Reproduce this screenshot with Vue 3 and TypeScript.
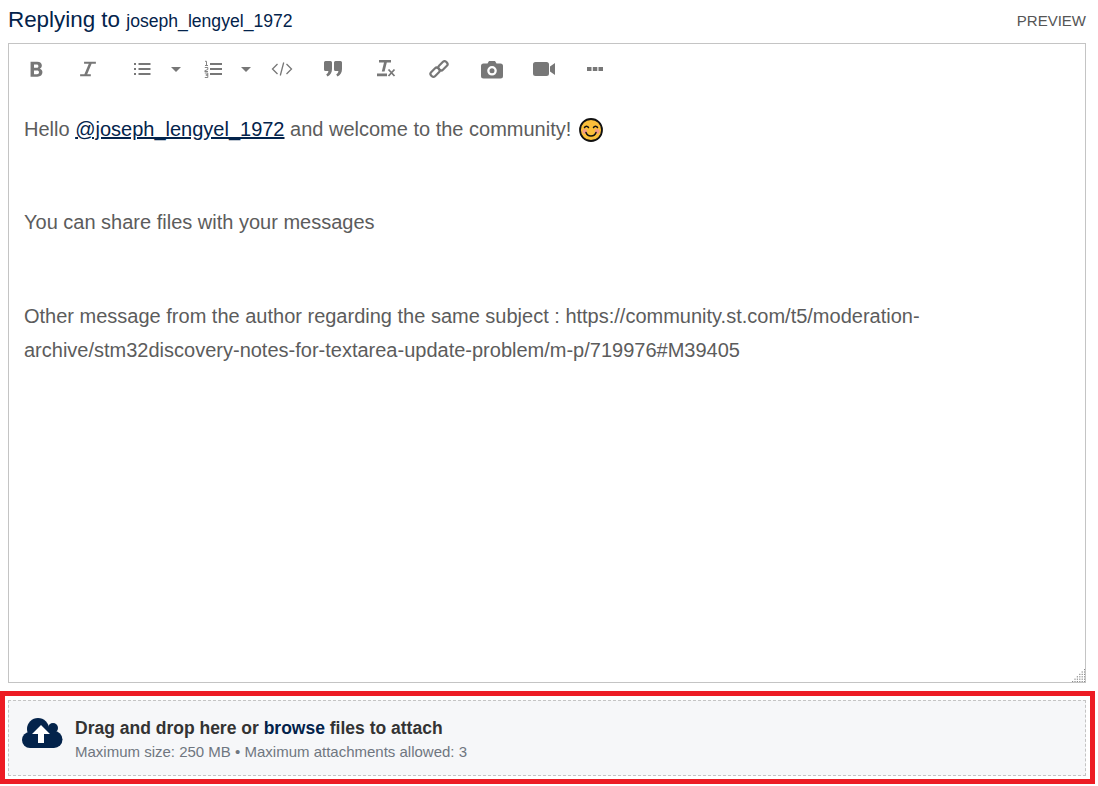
<script setup lang="ts">
const dots: [number, number][] = [];
for (let r = 0; r < 6; r++) {
  for (let c = 5 - r; c < 6; c++) {
    dots.push([c * 2.4, r * 2.4]);
  }
}
</script>

<template>
  <div class="page">
    <header class="head">
      <h2 class="title">Replying to <span class="user">joseph_lengyel_1972</span></h2>
      <span class="preview">PREVIEW</span>
    </header>

    <section class="editor">
      <div class="toolbar">
        <button class="tb w-b">
          <svg width="19" height="19" viewBox="0 0 16 16"><path d="M3 1.500h5.600c2.500 0 3.900 1.200 3.900 3.200 0 1.300-.7 2.300-1.800 2.700 1.400.4 2.300 1.500 2.300 3 0 2.300-1.600 3.600-4.200 3.600H3zm2.900 2.300v2.800h2.200c1 0 1.500-.5 1.500-1.400s-.5-1.400-1.500-1.400zm0 5v3.100h2.500c1.100 0 1.700-.6 1.700-1.600s-.6-1.500-1.700-1.500z" fill="#777"/></svg>
        </button>
        <button class="tb w-i">
          <svg width="18" height="18" viewBox="0 0 16 16"><path d="M4.500 1.500H15v1.800h-3.800L7.300 12.700h3.200v1.800H1v-1.800h3.800L8.700 3.300H4.500z" fill="#777"/></svg>
        </button>
        <button class="tb w-ul">
          <svg width="18" height="16" viewBox="0 0 18 16"><g fill="#777"><rect x="5.500" y="2" width="12" height="2"/><rect x="5.500" y="7" width="12" height="2"/><rect x="5.500" y="12" width="12" height="2"/><rect x="1" y="2" width="2" height="2"/><rect x="1" y="7" width="2" height="2"/><rect x="1" y="12" width="2" height="2"/></g></svg>
        </button>
        <button class="tb w-caret"><svg width="10" height="5" viewBox="0 0 10 5"><path d="M0 0h10L5 5z" fill="#777"/></svg></button>
        <button class="tb w-ol">
          <svg width="18" height="18" viewBox="0 0 18 18"><g fill="#777"><rect x="6" y="3" width="12" height="2"/><rect x="6" y="8" width="12" height="2"/><rect x="6" y="13" width="12" height="2"/></g><g fill="none" stroke="#777" stroke-width=".9"><path d="M1 1.300h1.500v4M1 5.500h3M.8 7.500h3v2l-3 1.200v.8h3.200M.8 13h3v2h-2 2v2.500h-3"/></g></svg>
        </button>
        <button class="tb w-caret2"><svg width="10" height="5" viewBox="0 0 10 5"><path d="M0 0h10L5 5z" fill="#777"/></svg></button>
        <button class="tb w-code">
          <svg width="22" height="16" viewBox="0 0 22 16"><path d="M6.500 3 1.500 8l5 5M15.500 3l5 5-5 5M12.700 1.500 9.300 14.500" fill="none" stroke="#777" stroke-width="1.300"/></svg>
        </button>
        <button class="tb w-q">
          <svg width="20" height="18" viewBox="0 0 20 18"><path d="M2.500 1h5A1.500 1.500 0 0 1 9 2.500V9c0 3.400-1.600 6.200-4.500 7.500l-1.300-2c1.400-.8 2.100-1.900 2.200-3.500H2.500A1.500 1.500 0 0 1 1 9.500v-7A1.500 1.500 0 0 1 2.500 1zM12.500 1h5A1.500 1.500 0 0 1 19 2.500V9c0 3.400-1.600 6.200-4.500 7.500l-1.300-2c1.400-.8 2.100-1.900 2.200-3.500h-2.900a1.500 1.500 0 0 1-1.500-1.500v-7A1.500 1.500 0 0 1 12.500 1z" fill="#777"/></svg>
        </button>
        <button class="tb w-tx">
          <svg width="20" height="18" viewBox="0 0 20 18"><path d="M3 0h12v2.500h-4.200L8.600 11.500H5.800L8 2.500H3zM1 13.500h10v2.800H1z" fill="#777"/><path d="M12.500 9.500l6 6.500M18.500 9.500l-6 6.500" stroke="#777" stroke-width="1.800"/></svg>
        </button>
        <button class="tb w-link">
          <svg width="20" height="20" viewBox="0 0 20 20"><g fill="none" stroke="#777" stroke-width="2.200" stroke-linejoin="round"><rect x="1" y="10.500" width="10" height="5.500" rx="2.200" transform="rotate(-45 6 13.200)"/><rect x="9" y="4" width="10" height="5.500" rx="2.200" transform="rotate(-45 14 6.800)"/></g></svg>
        </button>
        <button class="tb w-cam">
          <svg width="22" height="19" viewBox="0 0 22 18"><path fill-rule="evenodd" d="M2.500 3H6.500L8 .5h6L15.500 3h4A2.500 2.500 0 0 1 22 5.500v10a2.500 2.500 0 0 1-2.500 2.500h-17A2.500 2.500 0 0 1 0 15.500v-10A2.500 2.500 0 0 1 2.500 3zM11 5.500a4.800 4.800 0 1 0 0 9.600 4.800 4.800 0 0 0 0-9.600zm0 2.300a2.500 2.500 0 1 1 0 5 2.500 2.500 0 0 1 0-5z" fill="#777"/></svg>
        </button>
        <button class="tb w-vid">
          <svg width="22" height="16" viewBox="0 0 22 16"><path d="M2.500 1h11A2.500 2.500 0 0 1 16 3.500v9a2.500 2.500 0 0 1-2.500 2.500h-11A2.500 2.500 0 0 1 0 12.500v-9A2.500 2.500 0 0 1 2.500 1zM17 5.500 22 2v12l-5-3.500z" fill="#777"/></svg>
        </button>
        <button class="tb w-more">
          <svg width="16" height="6" viewBox="0 0 16 6"><g fill="#777"><rect x="0" y="1" width="4.500" height="4"/><rect x="5.800" y="1" width="4.500" height="4"/><rect x="11.500" y="1" width="4.500" height="4"/></g></svg>
        </button>
      </div>

      <div class="body">
        <p class="para">
          Hello <a class="mention">@joseph_lengyel_1972</a> and welcome to the community!
          <svg class="emoji" width="24" height="24" viewBox="0 0 24 24">
            <circle cx="12" cy="12" r="11" fill="#fbbf3a" stroke="#111" stroke-width="1.800"/>
            <circle cx="5.800" cy="13.500" r="2.400" fill="#f59a83"/>
            <circle cx="18.200" cy="13.500" r="2.400" fill="#f59a83"/>
            <path d="M5.500 9.500c1-1.600 3-1.600 4 0M14.500 9.500c1-1.600 3-1.600 4 0M7 14.500c1.500 4.500 8.500 4.500 10 0" fill="none" stroke="#111" stroke-width="1.500" stroke-linecap="round"/>
          </svg>
        </p>
        <p class="para para-mid">You can share files with your messages</p>
        <p class="para">Other message from the author regarding the same subject : https://community.st.com/t5/moderation-<br>archive/stm32discovery-notes-for-textarea-update-problem/m-p/719976#M39405</p>
      </div>

      <svg class="grip" width="13" height="13" viewBox="0 0 13 13">
        <rect v-for="(d, i) in dots" :key="i" :x="d[0]" :y="d[1]" width="1.200" height="1.200" fill="#8a8a8a" />
      </svg>
    </section>

    <section class="dropframe">
      <div class="drop">
        <svg class="cloud" width="41" height="30" viewBox="0 0 41 30">
          <g fill="#03234b">
            <circle cx="16" cy="11" r="11"/>
            <circle cx="31" cy="10" r="5"/>
            <circle cx="8" cy="22" r="8"/>
            <circle cx="32" cy="21.500" r="8.500"/>
            <rect x="8" y="12" width="24" height="18"/>
          </g>
          <path d="M19 7 28 16h-6v9h-6v-9h-6z" fill="#fff"/>
        </svg>
        <div class="droptext">
          <div class="dropmain">Drag and drop here or <span class="browse">browse</span> files to attach</div>
          <div class="dropsub">Maximum size: 250 MB • Maximum attachments allowed: 3</div>
        </div>
      </div>
    </section>
  </div>
</template>

<style>
html, body { margin: 0; background: #fff; }
</style>

<style scoped>
.page {
  width: 1095px;
  height: 786px;
  font-family: "Liberation Sans", Arial, sans-serif;
  background: #fff;
  box-sizing: border-box;
  overflow: hidden;
}
.head {
  height: 43px;
  margin: 0 9px 0 8px;
  display: flex;
  justify-content: space-between;
  align-items: flex-start;
}
.title {
  margin: 6px 0 0;
  font-size: 22.400px;
  line-height: 28px;
  font-weight: 400;
  color: #03234b;
}
.user { font-size: 17.600px; }
.preview {
  margin-top: 12px;
  font-size: 15px;
  line-height: 18px;
  color: #555;
}
.editor {
  position: relative;
  margin: 0 9px 0 8px;
  height: 640px;
  box-sizing: border-box;
  border: 1px solid #c4c4c4;
}
.toolbar {
  display: flex;
  height: 50px;
  padding-left: 1px;
  align-items: center;
}
.tb {
  border: 0;
  padding: 0;
  background: none;
  display: flex;
  justify-content: center;
  align-items: center;
  height: 50px;
  flex: none;
}
.w-b { width: 52px; }
.w-i { width: 52px; }
.w-ul { width: 50px; margin-left: 3px; }
.w-caret { width: 18px; }
.w-ol { width: 55px; }
.w-caret2 { width: 11px; }
.w-code { width: 62px; }
.w-q { width: 39px; }
.w-tx { width: 68px; }
.w-link { width: 37px; }
.w-cam { width: 69px; }
.w-vid { width: 35px; }
.w-more { width: 67px; }
.body {
  padding: 18px 15px 0;
  color: #5c5c5c;
}
.para {
  margin: 0 0 59px;
  font-size: 20px;
  line-height: 34px;
}
.para-mid { margin-bottom: 60px; }
.mention {
  color: #03234b;
  text-decoration: underline;
}
.emoji {
  vertical-align: -6px;
  margin-left: 2px;
}
.grip {
  position: absolute;
  right: 0;
  bottom: 0;
}
.dropframe {
  margin-top: 8px;
  height: 93px;
  box-sizing: border-box;
  border: 5px solid #ed1c24;
  padding: 4px 4px 3px 3px;
}
.drop {
  height: 100%;
  box-sizing: border-box;
  border: 1px dashed #c4c4c4;
  background: #f6f7f9;
  display: flex;
  align-items: center;
  padding: 2px 0 0 13px;
}
.cloud { flex: none; margin-right: 12px; margin-top: -12px; }
.dropmain {
  font-size: 17.500px;
  line-height: 24px;
  font-weight: 700;
  color: #333;
}
.browse { color: #03234b; }
.dropsub {
  font-size: 15px;
  line-height: 20px;
  margin-top: 2px;
  color: #6f7680;
}
</style>
